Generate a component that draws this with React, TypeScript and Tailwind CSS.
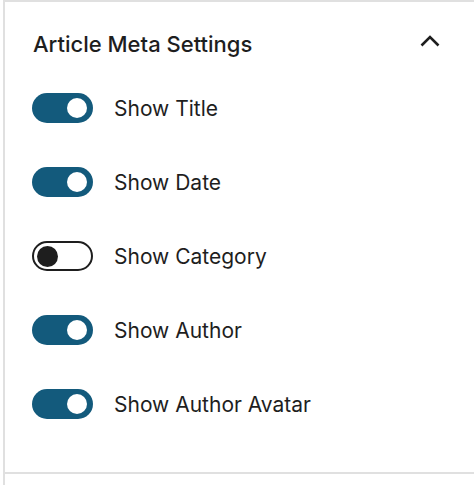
import React from "react";

const items: { label: string; on: boolean }[] = [
  { label: "Show Title", on: true },
  { label: "Show Date", on: true },
  { label: "Show Category", on: false },
  { label: "Show Author", on: true },
  { label: "Show Author Avatar", on: true },
];

function Toggle({ on }: { on: boolean }) {
  if (on) {
    return (
      <div className="w-[61px] h-[30px] rounded-full bg-[#135a7c] flex items-center justify-end pr-[6px] shrink-0">
        <div className="w-[20px] h-[20px] rounded-full bg-white" />
      </div>
    );
  }
  return (
    <div className="w-[61px] h-[30px] rounded-full border-2 border-[#1e1e1e] bg-white flex items-center justify-start pl-[3px] shrink-0">
      <div className="w-[21px] h-[21px] rounded-full bg-[#1e1e1e]" />
    </div>
  );
}

export default function App() {
  return (
    <div
      className="w-[474px] h-[485px] bg-white pl-[3px] overflow-hidden"
      style={{ fontFamily: "Inter, 'Noto Sans', sans-serif" }}
    >
      <div className="h-full border-l-2 border-[#e0e0e0] flex flex-col">
        <div className="h-[474px] border-t-2 border-b-2 border-[#e0e0e0] flex flex-col">
          <div className="mt-[27px] h-[30px] flex items-center justify-between pl-[28px] pr-[33px]">
            <span className="text-[22px] leading-[30px] font-medium text-[#1e1e1e]">
              Article Meta Settings
            </span>
            <svg width="22" height="14" viewBox="0 0 22 14" className="mb-[6px]">
              <polyline
                points="2.5,11.5 11,3 19.5,11.5"
                fill="none"
                stroke="#1e1e1e"
                strokeWidth="2.6"
              />
            </svg>
          </div>
          <div className="mt-[12px] flex flex-col pl-[27px]">
            {items.map((it) => (
              <div key={it.label} className="h-[74px] flex items-center gap-[21px]">
                <Toggle on={it.on} />
                <span className="text-[21px] leading-[30px] pt-[2px] text-[#1e1e1e]">{it.label}</span>
              </div>
            ))}
          </div>
        </div>
      </div>
    </div>
  );
}
